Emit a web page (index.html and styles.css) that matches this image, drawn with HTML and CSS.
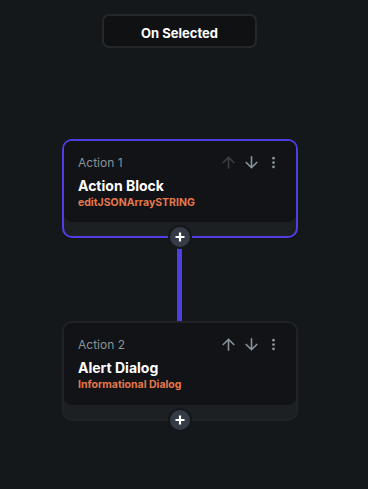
FILE: index.html
```html
<!DOCTYPE html>
<html lang="en">
<head>
  <meta charset="UTF-8">
  <title>On Selected — action flow</title>
  <link rel="stylesheet" href="styles.css">
</head>
<body>
  <div class="flow">
    <div class="trigger">On Selected</div>

    <div class="block block-active">
      <div class="card">
        <div class="card-head">
          <span class="card-label">Action 1</span>
          <div class="card-tools">
            <svg class="tool tool-dim" viewBox="0 0 24 24"><path d="M4 12l1.41 1.41L11 7.83V20h2V7.83l5.58 5.59L20 12l-8-8-8 8z"/></svg>
            <svg class="tool" viewBox="0 0 24 24"><path d="M20 12l-1.41-1.41L13 16.17V4h-2v12.17l-5.58-5.59L4 12l8 8 8-8z"/></svg>
            <svg class="tool tool-dots" viewBox="0 0 6 24"><circle cx="3" cy="5" r="2.2"/><circle cx="3" cy="12" r="2.2"/><circle cx="3" cy="19" r="2.2"/></svg>
          </div>
        </div>
        <div class="card-title">Action Block</div>
        <div class="card-sub">editJSONArraySTRING</div>
      </div>
      <div class="add-btn"><svg viewBox="0 0 12 12"><path d="M6 1.5v9M1.5 6h9"/></svg></div>
    </div>

    <div class="connector"></div>

    <div class="block">
      <div class="card">
        <div class="card-head">
          <span class="card-label">Action 2</span>
          <div class="card-tools">
            <svg class="tool" viewBox="0 0 24 24"><path d="M4 12l1.41 1.41L11 7.83V20h2V7.83l5.58 5.59L20 12l-8-8-8 8z"/></svg>
            <svg class="tool" viewBox="0 0 24 24"><path d="M20 12l-1.41-1.41L13 16.17V4h-2v12.17l-5.58-5.59L4 12l8 8 8-8z"/></svg>
            <svg class="tool tool-dots" viewBox="0 0 6 24"><circle cx="3" cy="5" r="2.2"/><circle cx="3" cy="12" r="2.2"/><circle cx="3" cy="19" r="2.2"/></svg>
          </div>
        </div>
        <div class="card-title">Alert Dialog</div>
        <div class="card-sub">Informational Dialog</div>
      </div>
      <div class="add-btn"><svg viewBox="0 0 12 12"><path d="M6 1.5v9M1.5 6h9"/></svg></div>
    </div>
  </div>
</body>
</html>
```

FILE: styles.css
```css
:root {
  --bg: #15181b;
  --card: #111316;
  --strip: #1c2023;
  --accent: #4f3fe3;
  --muted: #8a939b;
  --orange: #e5784c;
  --font: 'Inter', 'Noto Sans', sans-serif;
}

body {
  background-color: var(--bg);
  color: #ffffff;
  font-family: var(--font);
  margin: 0;
  width: 368px;
  height: 489px;
  overflow: hidden;
}

.flow {
  display: flex;
  flex-direction: column;
  align-items: center;
  padding-top: 14px;
}

.trigger {
  box-sizing: border-box;
  width: 155px;
  height: 34px;
  display: flex;
  align-items: center;
  justify-content: center;
  background: #0f1113;
  border: 2px solid #24282b;
  border-radius: 7px;
  padding-top: 3px;
  font-size: 13px;
  font-weight: 700;
  margin-right: 9px;
  margin-bottom: 91px;
}

.block {
  position: relative;
  box-sizing: border-box;
  width: 236px;
  height: 100px;
  margin-right: 8px;
  background: var(--strip);
  border: 2px solid #1f2326;
  border-radius: 10px;
  padding-bottom: 14px;
}

.block-active {
  height: 99px;
  border-color: var(--accent);
}

.card {
  box-sizing: border-box;
  height: 100%;
  background: var(--card);
  border-radius: 8px;
  padding: 11px 14px 0;
}

.card-head {
  display: flex;
  align-items: center;
  justify-content: space-between;
  height: 20px;
}

.card-label {
  font-size: 12px;
  color: var(--muted);
}

.card-tools {
  display: flex;
  align-items: center;
  gap: 4px;
  margin-right: 6px;
}

.tool {
  width: 19px;
  height: 19px;
  fill: var(--muted);
}

.tool-dim {
  fill: #3a3f45;
}

.tool-dots {
  width: 5px;
  height: 15px;
  margin-left: 6px;
}

.card-title {
  font-size: 14px;
  font-weight: 700;
  margin-top: 5px;
}

.card-sub {
  font-size: 10.5px;
  font-weight: 700;
  color: var(--orange);
  margin-top: 2px;
}

.add-btn {
  position: absolute;
  left: 50%;
  bottom: -13px;
  transform: translateX(-50%);
  box-sizing: border-box;
  width: 24px;
  height: 24px;
  border-radius: 50%;
  background: #343b46;
  border: 2px solid #15181b;
  display: flex;
  align-items: center;
  justify-content: center;
  z-index: 2;
}

.add-btn svg {
  width: 12px;
  height: 12px;
  stroke: #ffffff;
  stroke-width: 2.2;
  fill: none;
}

.connector {
  width: 5px;
  height: 83px;
  margin-right: 9px;
  background: var(--accent);
}
```
